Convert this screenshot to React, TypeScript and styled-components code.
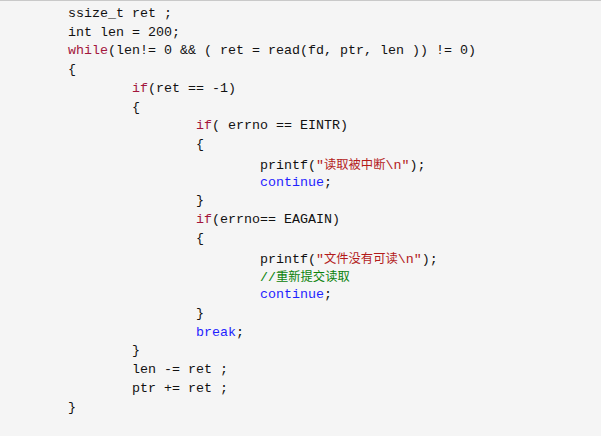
import React from "react";
import styled, { createGlobalStyle } from "styled-components";

const Global = createGlobalStyle`
  html, body { margin: 0; padding: 0; background: #f5f5f5; }
  #root { width: 601px; height: 436px; }
`;

const CodeBlock = styled.pre`
  box-sizing: border-box;
  margin: 0;
  width: 601px;
  height: 436px;
  overflow: hidden;
  background: #f5f5f5;
  border-top: 1px solid #c9c9c9;
  padding: 3.8px 0 0 68px;
  font-family: "Liberation Mono", "Courier New", monospace;
  font-size: 13.333px;
  line-height: 18.76px;
  color: #111;
  tab-size: 8;
  -moz-tab-size: 8;
`;

const Line = styled.div`
  white-space: pre;
  height: 18.76px;
`;

const Kw = styled.span<{ $kind: "ctrl" | "flow" }>`
  color: ${(p) => (p.$kind === "ctrl" ? "#a3153c" : "#1f1fff")};
`;

const Str = styled.span`
  color: #b31b1b;
`;

const Comment = styled.span`
  color: #0a820a;
`;

const Cjk = styled.span`
  font-family: "Noto Sans CJK SC", "Noto Sans CJK TC", sans-serif;
  font-size: 12.3px;
`;

const T = "\t";

export default function App() {
  return (
    <>
      <Global />
      <CodeBlock>
        <Line>ssize_t ret ;</Line>
        <Line>int len = 200;</Line>
        <Line>
          <Kw $kind="ctrl">while</Kw>(len!= 0 &amp;&amp; ( ret = read(fd, ptr, len )) != 0)
        </Line>
        <Line>{"{"}</Line>
        <Line>
          {T}
          <Kw $kind="ctrl">if</Kw>(ret == -1)
        </Line>
        <Line>{T + "{"}</Line>
        <Line>
          {T + T}
          <Kw $kind="ctrl">if</Kw>( errno == EINTR)
        </Line>
        <Line>{T + T + "{"}</Line>
        <Line>
          {T + T + T}printf(
          <Str>
            "<Cjk>读取被中断</Cjk>\n"
          </Str>
          );
        </Line>
        <Line>
          {T + T + T}
          <Kw $kind="flow">continue</Kw>;
        </Line>
        <Line>{T + T + "}"}</Line>
        <Line>
          {T + T}
          <Kw $kind="ctrl">if</Kw>(errno== EAGAIN)
        </Line>
        <Line>{T + T + "{"}</Line>
        <Line>
          {T + T + T}printf(
          <Str>
            "<Cjk>文件没有可读</Cjk>\n"
          </Str>
          );
        </Line>
        <Line>
          {T + T + T}
          <Comment>
            //<Cjk>重新提交读取</Cjk>
          </Comment>
        </Line>
        <Line>
          {T + T + T}
          <Kw $kind="flow">continue</Kw>;
        </Line>
        <Line>{T + T + "}"}</Line>
        <Line>
          {T + T}
          <Kw $kind="flow">break</Kw>;
        </Line>
        <Line>{T + "}"}</Line>
        <Line>{T}len -= ret ;</Line>
        <Line>{T}ptr += ret ;</Line>
        <Line>{"}"}</Line>
      </CodeBlock>
    </>
  );
}
